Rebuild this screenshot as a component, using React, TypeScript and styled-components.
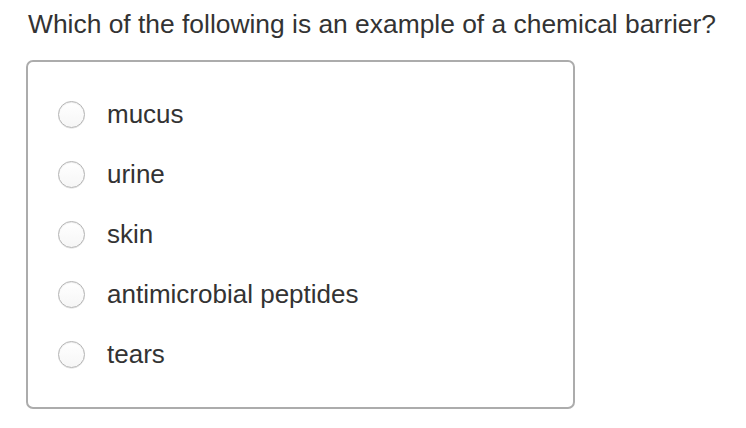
import React from "react";
import styled, { createGlobalStyle } from "styled-components";

const Global = createGlobalStyle`
  html, body { margin: 0; padding: 0; background: #fff; }
  body { font-family: "Liberation Sans", Arial, Helvetica, sans-serif; color: #333; }
`;

const Page = styled.div`
  padding: 8px 0 0 28px;
`;

const Question = styled.h1`
  margin: 0;
  font-size: 26.4px;
  font-weight: 400;
  line-height: 32px;
  color: #333;
`;

const Box = styled.div`
  margin: 20px 0 0 -2px;
  width: 549px;
  height: 349px;
  border: 2px solid #acacac;
  border-radius: 7px;
  padding: 39px 0 0 30px;
  box-sizing: border-box;
  display: flex;
  flex-direction: column;
  gap: 34px;
`;

const Option = styled.label`
  display: flex;
  align-items: center;
  height: 26px;
  font-size: 26px;
  color: #333;
  cursor: pointer;
`;

const Radio = styled.span`
  width: 27px;
  height: 27px;
  border-radius: 50%;
  box-sizing: border-box;
  border: 1px solid #b5b5b5;
  background: linear-gradient(#ffffff, #f6f6f6);
  box-shadow: inset 0 1px 1px rgba(0,0,0,0.08), 0 0.5px 0.5px rgba(0,0,0,0.15);
  margin-right: 22px;
  flex: none;
`;

const options = ["mucus", "urine", "skin", "antimicrobial peptides", "tears"];

export default function App() {
  return (
    <Page>
      <Global />
      <Question>Which of the following is an example of a chemical barrier?</Question>
      <Box>
        {options.map((o) => (
          <Option key={o}>
            <Radio />
            {o}
          </Option>
        ))}
      </Box>
    </Page>
  );
}
